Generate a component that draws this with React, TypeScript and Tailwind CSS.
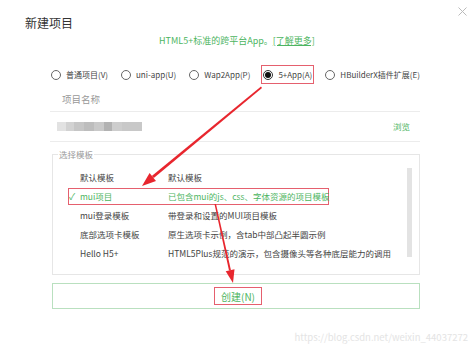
import React from 'react'

const radios = [
    { label: '普通项目(V)', checked: false },
    { label: 'uni-app(U)', checked: false },
    { label: 'Wap2App(P)', checked: false },
    { label: '5+App(A)', checked: true },
    { label: 'HBuilderX插件扩展(E)', checked: false },
]

const templates = [
    { name: '默认模板', desc: '默认模板', selected: false },
    { name: 'mui项目', desc: '已包含mui的js、css、字体资源的项目模板', selected: true },
    { name: 'mui登录模板', desc: '带登录和设置的MUI项目模板', selected: false },
    { name: '底部选项卡模板', desc: '原生选项卡示例，含tab中部凸起半圆示例', selected: false },
    { name: 'Hello H5+', desc: 'HTML5Plus规范的演示，包含摄像头等各种底层能力的调用', selected: false },
]

const blurBlocks = [
    ['w-[9px]', 'bg-[#e2e2e2]'],
    ['w-[8px]', 'bg-[#d2d2d2]'],
    ['w-[10px]', 'bg-[#c6c6c6]'],
    ['w-[10px]', 'bg-[#bdbdbd]'],
    ['w-[10px]', 'bg-[#c9c9c9]'],
    ['w-[8px]', 'bg-[#b2b2b2]'],
    ['w-[10px]', 'bg-[#cdcdcd]'],
    ['w-[20px]', 'bg-[#c8c8c8]'],
]

export default function App() {
    return (
        <div className="relative w-[474px] h-[347px] overflow-hidden bg-white font-['Noto_Sans_CJK_SC','Noto_Sans',sans-serif] text-[#444]">
            {/* header */}
            <div className="flex h-[32px] justify-between">
                <div className="pl-[25px] pt-[15px] text-[12px] leading-[16px] text-[#333]">新建项目</div>
                <div className="pr-[7px] pt-[7px]">
                    <svg width="9" height="9" viewBox="0 0 9 9" className="block">
                        <path d="M0.5 0.5 L8.5 8.5 M8.5 0.5 L0.5 8.5" stroke="#bbb" strokeWidth="1" />
                    </svg>
                </div>
            </div>

            <div className="h-[18px] text-center text-[9px] leading-[18px] text-[#4db561]">
                HTML5+标准的跨平台App。<span className="underline">[了解更多]</span>
            </div>

            {/* project types */}
            <div className="mt-[15px] flex h-[19px] items-center gap-[9px] pl-[49px] text-[8px]">
                {radios.map((r) => (
                    <div
                        key={r.label}
                        className={`flex h-[19px] items-center border px-[1px] ${r.checked ? 'border-[#e5606e]' : 'border-transparent'}`}
                    >
                        <span className={`flex h-[10px] w-[10px] items-center justify-center rounded-full border ${r.checked ? 'border-[#333]' : 'border-[#666]'}`}>
                            {r.checked && <span className="h-[6px] w-[6px] rounded-full bg-[#111]" />}
                        </span>
                        <span className="ml-[5px] whitespace-nowrap">{r.label}</span>
                    </div>
                ))}
            </div>

            {/* name field */}
            <div className="ml-[50px] flex h-[28px] w-[370px] items-center border-b border-[#ececec] pl-[12px] pt-[3px] text-[9.5px] text-[#999]">
                项目名称
            </div>

            {/* location field */}
            <div className="ml-[50px] flex h-[30px] w-[370px] items-center justify-between border-b border-[#ececec] pl-[7px] pr-[10px]">
                <div className="flex h-[9px]">
                    {blurBlocks.map(([w, bg], i) => (
                        <div key={i} className={`h-full ${w} ${bg}`} />
                    ))}
                </div>
                <span className="text-[8.5px] text-[#4db561]">浏览</span>
            </div>

            {/* templates */}
            <fieldset className="ml-[52px] mt-[6px] h-[127px] w-[368px] border border-[#e6e6e6]">
                <legend className="ml-[5px] px-[1px] text-[8.5px] leading-[12px] text-[#999]">选择模板</legend>
                <div className="flex pt-[8px]">
                    <div className="flex-1">
                        {templates.map((t) => (
                            <div key={t.name} className="flex h-[19px] items-center pl-[15px]">
                                <div
                                    className={`flex h-[17px] w-[261px] items-center border text-[8.5px] ${t.selected ? 'border-[#e5606e] text-[#4db561]' : 'border-transparent'}`}
                                >
                                    <span className="w-[11px] shrink-0 text-[9px] leading-none text-[#4db561]">{t.selected ? '✓' : ''}</span>
                                    <span className="w-[88px] shrink-0 whitespace-nowrap">{t.name}</span>
                                    <span className="shrink-0 whitespace-nowrap">{t.desc}</span>
                                </div>
                            </div>
                        ))}
                    </div>
                    <div className="mr-[7px] h-[89px] w-[5px] bg-[#e3e3e3]" />
                </div>
            </fieldset>

            {/* create button */}
            <div className="ml-[52px] mt-[8px] flex h-[26px] w-[368px] items-center justify-center border border-[#b9e0bf] pl-[4px]">
                <div className="flex h-[18px] w-[48px] items-center justify-center border border-[#e5606e] text-[10px] text-[#4db561]">
                    创建(N)
                </div>
            </div>

            <div className="mt-[22px] pr-[6px] text-right text-[9.5px] leading-[12px] text-[#e4e4e4]">
                https://blog.csdn.net/weixin_44037272
            </div>

            {/* annotation arrows */}
            <svg className="pointer-events-none absolute inset-0" width="474" height="347" viewBox="0 0 474 347">
                <polygon points="261,86.5 262,88 153.8,178 151.8,176" fill="#e8262e" />
                <polygon points="142,186 156,180.9 149.6,173.1" fill="#e8262e" />
                <polygon points="214.5,204 216,204 231,270.5 229,270.5" fill="#e8262e" />
                <polygon points="233,283 234.5,269.3 225.7,271.3" fill="#e8262e" />
            </svg>
        </div>
    )
}
